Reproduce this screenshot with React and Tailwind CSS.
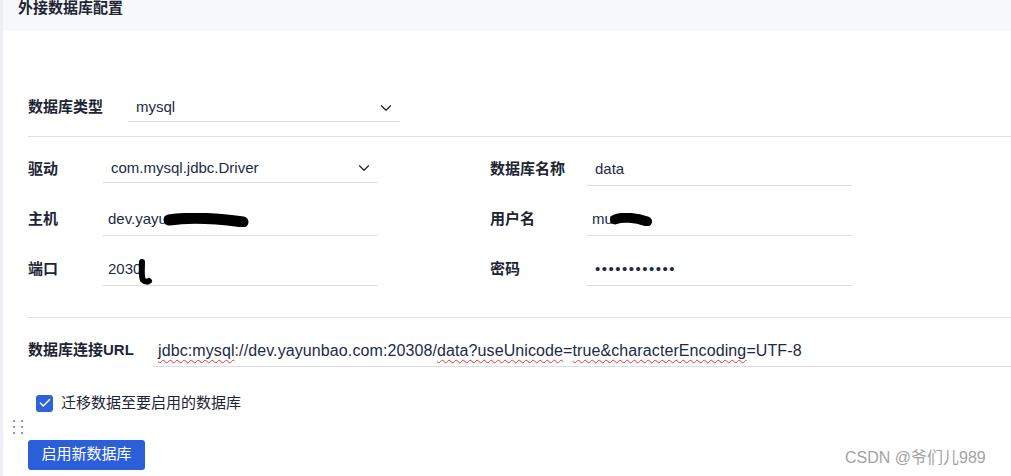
import { ChevronDown, Check } from "lucide-react";

const font = { fontFamily: '"Liberation Sans", "Noto Sans CJK SC", sans-serif' };

const Label = ({ children, className = "" }) => (
  <div className={`flex items-center text-[15px] font-semibold text-[#1d2433] ${className}`}>
    {children}
  </div>
);

const Field = ({ children, className = "" }) => (
  <div className={`flex items-center pt-[2px] border-b border-[#dcdde3] text-[15px] text-[#1c2a48] ${className}`}>
    {children}
  </div>
);

const Blob = ({ w, h }) => (
  <svg width={w} height={h} viewBox={`0 0 ${w} ${h}`} className="-ml-[4px]">
    <path
      d={`M6 ${h / 2} C ${w * 0.3} ${h / 2 - 3}, ${w * 0.6} ${h / 2 - 2}, ${w - 6} ${h / 2 + 2}`}
      stroke="#000"
      strokeWidth={h - 3}
      strokeLinecap="round"
      fill="none"
    />
  </svg>
);

const Wavy = ({ children }) => (
  <span className="underline decoration-wavy decoration-[#e53935] decoration-1 underline-offset-[3px]">
    {children}
  </span>
);

export default function App() {
  return (
    <div className="relative flex w-[1011px] h-[476px] overflow-hidden bg-white" style={font}>
      {/* left strip */}
      <div className="w-[3px] bg-[#eceef3]" />

      <div className="flex-1 flex flex-col">
        {/* Header */}
        <div className="h-[31px] bg-[#f7f8fb] pl-[15px]">
          <div className="text-[15px] leading-[16px] font-semibold text-[#1d2433]">外接数据库配置</div>
        </div>

        <div className="pl-[25px]">
          {/* type row */}
          <div className="mt-[61px] flex h-[30px]">
            <Label className="w-[100px]">数据库类型</Label>
            <Field className="w-[272px] justify-between pl-[8px] pr-[5px]">
              <span>mysql</span>
              <ChevronDown size={18} strokeWidth={1.6} className="text-[#1d2433]" />
            </Field>
          </div>

          <div className="mt-[14px] h-px bg-[#e0e1e6]" />

          {/* grid rows */}
          <div className="mt-[15px] grid grid-cols-[75px_275px_112px_97px_265px] gap-y-[16px]">
            <Label className="h-[34px] pt-[1px]">驱动</Label>
            <Field className="h-[31px] justify-between pl-[8px] pr-[5px]">
              <span>com.mysql.jdbc.Driver</span>
              <ChevronDown size={18} strokeWidth={1.6} className="text-[#1d2433]" />
            </Field>
            <div />
            <Label className="h-[34px] pt-[1px]">数据库名称</Label>
            <Field className="h-[34px] pl-[8px]">data</Field>

            <Label className="h-[34px] pt-[1px]">主机</Label>
            <Field className="h-[34px] pl-[5px]">
              <span>dev.yayu</span>
              <Blob w={86} h={14} />
            </Field>
            <div />
            <Label className="h-[34px] pt-[1px]">用户名</Label>
            <Field className="h-[34px] pl-[5px]">
              <span>mu</span>
              <Blob w={44} h={13} />
            </Field>

            <Label className="h-[34px] pt-[1px]">端口</Label>
            <Field className="h-[34px] pl-[5px]">
              <span>2030</span>
              <svg width="16" height="26" viewBox="0 0 16 26" className="-ml-[4px] mt-[4px]">
                <path d="M5 3 C 5 10, 4 17, 6 21 C 8 23, 11 23, 12 22" stroke="#000" strokeWidth="6" strokeLinecap="round" fill="none" />
              </svg>
            </Field>
            <div />
            <Label className="h-[34px] pt-[1px]">密码</Label>
            <Field className="h-[34px] pl-[8px] tracking-[1.5px]">••••••••••••</Field>
          </div>

          <div className="mt-[31px] h-px bg-[#e0e1e6]" />

          {/* URL row */}
          <div className="mt-[16px] flex h-[33px]">
            <Label className="w-[125px]">数据库连接URL</Label>
            <Field className="flex-1 pl-[5px] whitespace-nowrap text-[16px] tracking-[0.1px]">
              <span>
                <Wavy>jdbc:mysql</Wavy>://dev.yayunbao.com:20308/<Wavy>data?useUnicode</Wavy>=
                <Wavy>true&amp;characterEncoding</Wavy>=UTF-8
              </span>
            </Field>
          </div>

          {/* checkbox */}
          <div className="mt-[25px] flex items-center pl-[8px]">
            <div className="w-[17px] h-[17px] rounded-[3px] bg-[#2e62d9] flex items-center justify-center">
              <Check size={14} strokeWidth={2.5} className="text-white" />
            </div>
            <span className="ml-[8px] text-[15px] text-[#1d2433]">迁移数据至要启用的数据库</span>
          </div>

          {/* button */}
          <button className="mt-[25px] w-[117px] h-[30px] rounded-[3px] bg-[#2b5fd9] text-white text-[15px]">
            启用新数据库
          </button>
        </div>
      </div>

      {/* drag handle */}
      <div className="absolute left-[13px] top-[420px] grid grid-cols-2 gap-x-[6px] gap-y-[4px]">
        {[0, 1, 2, 3, 4, 5].map((i) => (
          <div key={i} className="w-[2px] h-[2px] rounded-full bg-[#6b7385]" />
        ))}
      </div>

      {/* watermark */}
      <div className="absolute left-[845px] top-[446px] text-[16px] text-[#a3a3a3]">CSDN @爷们儿989</div>
    </div>
  );
}
